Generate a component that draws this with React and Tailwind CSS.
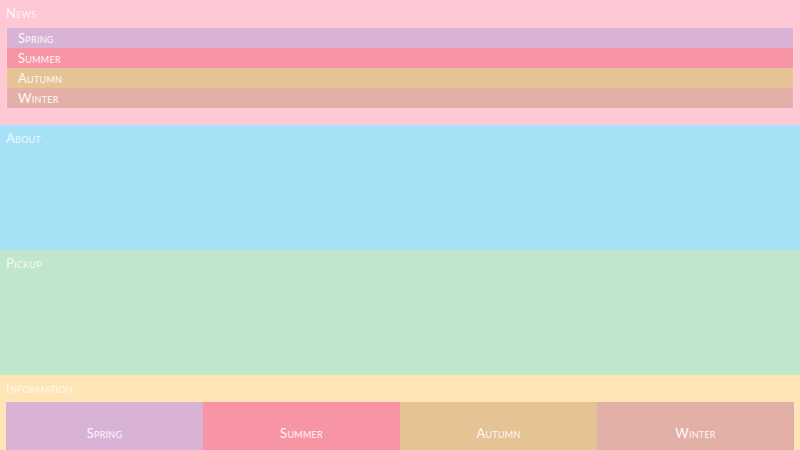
import React from 'react';

const seasons = [
  { name: 'Spring', bg: 'bg-[#d9b3d5]' },
  { name: 'Summer', bg: 'bg-[#f795a5]' },
  { name: 'Autumn', bg: 'bg-[#e5c395]' },
  { name: 'Winter', bg: 'bg-[#e2b0a7]' },
];

const font = { fontFamily: 'Lato, "Open Sans", sans-serif', fontVariant: 'small-caps' };

const Heading = ({ children }) => (
  <h2 className="text-[13px] leading-[15px] mb-[6px] text-white/80 tracking-[0.02em]">{children}</h2>
);

const App = () => {
  return (
    <div className="w-full overflow-hidden" style={font}>
      {/* News */}
      <section className="h-[125px] bg-[#ffc8d5] px-[6px] pt-[6px]">
        <Heading>News</Heading>
        <ul className="border border-white/10">
          {seasons.map(s => (
            <li key={s.name} className={`${s.bg} h-[20px] leading-[20px] pl-[11px] text-[13px] text-white/90 tracking-[0.02em]`}>
              {s.name}
            </li>
          ))}
        </ul>
      </section>

      {/* About */}
      <section className="h-[125px] bg-[#a7e1f5] px-[6px] pt-[6px]">
        <Heading>About</Heading>
      </section>

      {/* Pickup */}
      <section className="h-[125px] bg-[#c0e7cb] px-[6px] pt-[6px]">
        <Heading>Pickup</Heading>
      </section>

      {/* Information */}
      <section className="h-[125px] bg-[#ffe4b5] px-[6px] pt-[6px]">
        <Heading>Information</Heading>
        <div className="grid grid-cols-4">
          {seasons.map(s => (
            <div key={s.name} className={`${s.bg} h-[64px] flex items-center justify-center text-[13px] text-white/90 tracking-[0.02em]`}>
              {s.name}
            </div>
          ))}
        </div>
      </section>
    </div>
  );
};

export default App;
